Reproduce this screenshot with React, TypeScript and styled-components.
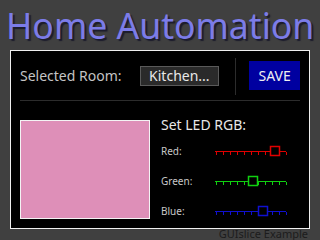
import React from "react";
import styled, { createGlobalStyle } from "styled-components";

const Global = createGlobalStyle`
  html, body { margin: 0; padding: 0; background: #404040; }
  body { width: 320px; height: 240px; overflow: hidden; font-family: "Noto Sans", "Open Sans", sans-serif; }
`;

const Screen = styled.div`
  width: 320px;
  height: 240px;
  display: flex;
  flex-direction: column;
  background: #404040;
`;

const Title = styled.h1`
  margin: 0;
  height: 50px;
  font-size: 35.6px;
  font-weight: 400;
  line-height: 50px;
  padding-left: 6px;
  color: #7c7ce8;
  text-shadow: 2px 2px 1px #1c1c2c;
  white-space: nowrap;
`;

const Panel = styled.div`
  margin: 0 10px;
  height: 179px;
  flex-shrink: 0;
  box-sizing: border-box;
  border: 1px solid #f0f0f0;
  background: #000;
  padding: 0 9px;
  display: flex;
  flex-direction: column;
  overflow: hidden;
`;

const TopRow = styled.div`
  height: 49px;
  flex-shrink: 0;
  display: flex;
  align-items: center;
  border-bottom: 1px solid #2c2c2c;
`;

const Label = styled.span`
  color: #c4c4c4;
  font-size: 14px;
  width: 120px;
`;

const RoomButton = styled.div`
  width: 80px;
  height: 20px;
  box-sizing: border-box;
  background: #2a2a2a;
  border: 1px solid #5a5a5a;
  color: #e8e8e8;
  font-size: 14px;
  line-height: 18px;
  text-align: center;
`;

const Divider = styled.div`
  width: 1px;
  height: 37px;
  background: #2c2c2c;
  margin: 2px 13px 0 16px;
`;

const SaveButton = styled.div`
  width: 51px;
  height: 29px;
  background: #0000a0;
  color: #f0f0f0;
  font-size: 14px;
  line-height: 29px;
  text-align: center;
`;

const Bottom = styled.div`
  display: flex;
  padding-top: 19px;
  gap: 11px;
`;

const ColorBox = styled.div<{ $color: string }>`
  width: 130px;
  height: 99px;
  flex-shrink: 0;
  box-sizing: border-box;
  border: 1px solid #f4f4f4;
  background: ${(p) => p.$color};
`;

const RgbColumn = styled.div`
  display: flex;
  flex-direction: column;
`;

const RgbTitle = styled.div`
  color: #e8e8e8;
  font-size: 14px;
  line-height: 16px;
  margin-top: -3px;
  height: 19px;
`;

const SliderRow = styled.div`
  display: flex;
  align-items: center;
  height: 30px;
`;

const SliderLabel = styled.span`
  width: 54px;
  color: #c8c8c8;
  font-size: 10px;
`;

const Footer = styled.div`
  text-align: right;
  padding-right: 12px;
  font-size: 11px;
  line-height: 10px;
  color: #1c1c1c;
`;

function Slider({ color, pos }: { color: string; pos: number }) {
  const ticks = Array.from({ length: 11 }, (_, i) => 1 + i * 7);
  return (
    <svg width="72" height="16" viewBox="0 0 72 16">
      <line x1="0" y1="8.5" x2="71" y2="8.5" stroke={color} strokeWidth="1" />
      {ticks.map((x) => (
        <line key={x} x1={x + 0.5} y1="9" x2={x + 0.5} y2="12" stroke={color} strokeWidth="1" />
      ))}
      <rect x={pos + 0.5} y="3.5" width="9" height="9" fill="#000" stroke={color} strokeWidth="1.5" />
    </svg>
  );
}

export default function App() {
  return (
    <>
      <Global />
      <Screen>
        <Title>Home Automation</Title>
        <Panel>
          <TopRow>
            <Label>Selected Room:</Label>
            <RoomButton>Kitchen...</RoomButton>
            <Divider />
            <SaveButton>SAVE</SaveButton>
          </TopRow>
          <Bottom>
            <ColorBox $color="#de8fb8" />
            <RgbColumn>
              <RgbTitle>Set LED RGB:</RgbTitle>
              <SliderRow>
                <SliderLabel>Red:</SliderLabel>
                <Slider color="#e00000" pos={55} />
              </SliderRow>
              <SliderRow>
                <SliderLabel>Green:</SliderLabel>
                <Slider color="#10d010" pos={33} />
              </SliderRow>
              <SliderRow>
                <SliderLabel>Blue:</SliderLabel>
                <Slider color="#1010d0" pos={43} />
              </SliderRow>
            </RgbColumn>
          </Bottom>
        </Panel>
        <Footer>GUIslice Example</Footer>
      </Screen>
    </>
  );
}
